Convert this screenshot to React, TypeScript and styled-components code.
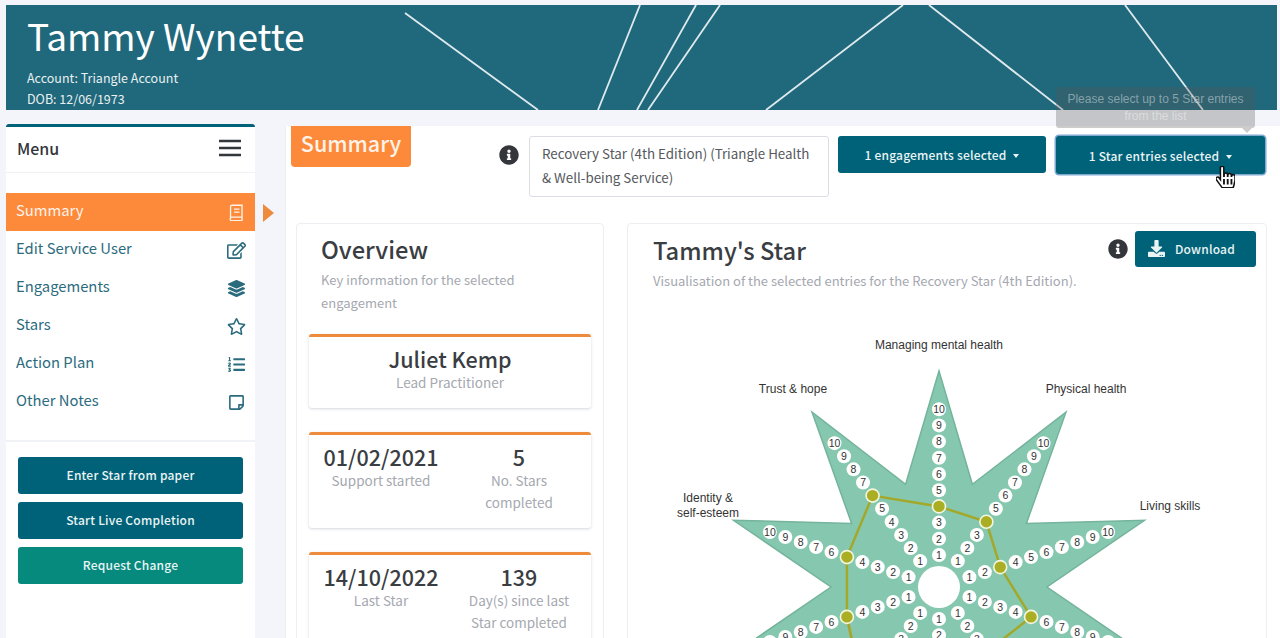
import styled, { createGlobalStyle } from "styled-components";
import {
  FaRegEdit,
  FaLayerGroup,
  FaRegStar,
  FaListOl,
  FaRegStickyNote,
  FaInfoCircle,
  FaDownload,
  FaHandPointer,
} from "react-icons/fa";

const Global = createGlobalStyle`
  html, body { margin: 0; padding: 0; background: #f3f5fa; }
  body { font-family: "Noto Sans CJK SC", "Noto Sans", sans-serif; color: #3a3d42; }
  * { box-sizing: border-box; }
`;

const Page = styled.div`
  height: 638px;
  overflow: hidden;
  padding: 5px 0 0 6px;
`;

const Banner = styled.header`
  position: relative;
  height: 105px;
  margin-right: 3px;
  padding: 7px 21px 0;
  background: #20687b;
  color: #fff;
  overflow: hidden;
`;

const BannerLines = styled.svg`
  position: absolute;
  left: 0;
  top: 0;
`;

const PatientName = styled.h1`
  position: relative;
  margin: 0 0 9px;
  font-size: 37px;
  line-height: 46px;
  font-weight: 400;
`;

const PatientMeta = styled.div`
  position: relative;
  font-size: 12.5px;
  line-height: 21px;
  color: #e8f0f2;
`;

const Content = styled.div`
  display: flex;
  margin-top: 14px;
`;

const Sidebar = styled.aside`
  flex: none;
  width: 249px;
  height: 520px;
  background: #fff;
  border-top: 3px solid #006278;
  border-radius: 3px 3px 0 0;
`;

const MenuHead = styled.div`
  display: flex;
  align-items: center;
  justify-content: space-between;
  height: 46px;
  padding: 0 14px 3px 11px;
  font-size: 16px;
  font-weight: 500;
  color: #33363b;
  border-bottom: 1px solid #f0f1f5;
`;

const MenuList = styled.nav`
  display: flex;
  flex-direction: column;
  padding: 20px 0 19px;
  border-bottom: 2px solid #f1f2f6;
`;

const MenuItem = styled.a<{ $active?: boolean }>`
  display: flex;
  align-items: center;
  justify-content: space-between;
  height: 38px;
  padding: 0 9px 5px 10px;
  font-size: 14.8px;
  color: ${(p) => (p.$active ? "#fdf3ea" : "#2b6b7e")};
  background: ${(p) => (p.$active ? "#fc8a3a" : "transparent")};
  svg {
    width: 19px;
    height: 17px;
    margin-top: 5px;
  }
`;

const SideActions = styled.div`
  display: flex;
  flex-direction: column;
  gap: 8px;
  padding: 15px 12px;
`;

const ActionButton = styled.button<{ $green?: boolean }>`
  height: 37px;
  padding: 0 0 2px;
  border: 0;
  border-radius: 3px;
  background: ${(p) => (p.$green ? "#068a7d" : "#006278")};
  color: #eaf4f5;
  font: 500 12px "Noto Sans CJK SC", "Noto Sans", sans-serif;
  letter-spacing: 0.22px;
`;

const ArrowSlot = styled.div`
  flex: none;
  width: 30px;
  padding: 80px 0 0 8px;
`;

const Arrow = styled.div`
  width: 0;
  height: 0;
  border-left: 11px solid #ee8a3c;
  border-top: 9px solid transparent;
  border-bottom: 9px solid transparent;
`;

const Main = styled.main`
  flex: 1;
  min-width: 0;
  margin-top: 2px;
  height: 520px;
  background: #fff;
  border-left: 1px solid #eceef3;
`;

const TopRow = styled.div`
  display: flex;
  align-items: flex-start;
  padding-right: 15px;
`;

const Tab = styled.div`
  width: 120px;
  height: 41px;
  margin-left: 5px;
  border-radius: 0 0 4px 4px;
  background: #fc8a3a;
  color: #fdf3ea;
  text-align: center;
  font-size: 21.5px;
  line-height: 34px;
  font-weight: 500;
`;

const Controls = styled.div`
  display: flex;
  align-items: flex-start;
  margin: 10px 0 0 auto;
`;

const InfoIcon = styled(FaInfoCircle)`
  flex: none;
  width: 20px;
  height: 20px;
  color: #33363b;
`;

const InfoSlot = styled.div`
  margin: 9px 10px 0 0;
`;

const SelectBox = styled.div`
  width: 300px;
  height: 61px;
  margin-right: 9px;
  padding: 5px 12px;
  border: 1px solid #dcdee4;
  border-radius: 3px;
  font-size: 13.35px;
  line-height: 24px;
  color: #55585d;
`;

const DropButton = styled.button<{ $focus?: boolean }>`
  width: ${(p) => (p.$focus ? "209px" : "208px")};
  height: ${(p) => (p.$focus ? "38px" : "37px")};
  padding: 0;
  border: 0;
  border-radius: 3px;
  background: #006278;
  color: #eaf4f5;
  font: 500 12px "Noto Sans CJK SC", "Noto Sans", sans-serif;
  letter-spacing: 0.2px;
  box-shadow: ${(p) => (p.$focus ? "0 0 0 1.5px #7fa9d0" : "none")};
  &::after {
    content: "";
    display: inline-block;
    margin-left: 7px;
    vertical-align: 2px;
    border-top: 4px solid #eaf4f5;
    border-left: 3.5px solid transparent;
    border-right: 3.5px solid transparent;
  }
`;

const TooltipAnchor = styled.div`
  position: relative;
  margin-left: 10px;
`;

const Tooltip = styled.div`
  position: absolute;
  left: 0;
  top: -49px;
  width: 199px;
  height: 41px;
  padding: 4px 8px;
  border-radius: 3px;
  background: rgba(85, 85, 85, 0.3);
  color: rgba(255, 255, 255, 0.42);
  text-align: center;
  font: 12px/17px "Liberation Sans", Arial, sans-serif;
  &::after {
    content: "";
    position: absolute;
    right: 3px;
    top: 41px;
    border-top: 5px solid rgba(85, 85, 85, 0.3);
    border-left: 5px solid transparent;
    border-right: 5px solid transparent;
  }
`;

const Cursor = styled(FaHandPointer)`
  position: absolute;
  left: 160px;
  top: 30px;
  width: 19px;
  height: 22px;
  color: #fff;
  stroke: #111;
  stroke-width: 36px;
`;

const CardRow = styled.div`
  display: flex;
  align-items: flex-start;
  gap: 23px;
  margin-top: 26px;
  padding-left: 10px;
`;

const Card = styled.section<{ $wide?: boolean }>`
  flex: none;
  width: ${(p) => (p.$wide ? "640px" : "308px")};
  border: 1px solid #eceef2;
  border-radius: 4px;
  background: #fff;
`;

const OverviewHead = styled.div`
  padding: 7px 25px 0 24px;
`;

const CardTitle = styled.h2`
  margin: 0;
  font-size: 23.7px;
  line-height: 36px;
  font-weight: 500;
  color: #3a3d42;
`;

const Hint = styled.p`
  margin: 2px 0 0;
  font-size: 13px;
  line-height: 22.5px;
  color: #a5a8af;
`;

const StatList = styled.div`
  display: flex;
  flex-direction: column;
  gap: 24px;
  margin-top: 20px;
  padding: 0 12px;
`;

const StatCard = styled.div<{ $single?: boolean }>`
  display: grid;
  grid-template-columns: ${(p) => (p.$single ? "1fr" : "1fr 1fr")};
  padding: 9px 3px 14px;
  border-top: 3px solid #ee8a3c;
  border-radius: 3px;
  background: #fff;
  box-shadow: 0 1px 3px rgba(60, 70, 90, 0.22);
  text-align: center;
`;

const StatValue = styled.div`
  font-size: 21.5px;
  line-height: 25px;
  font-weight: 500;
  color: #3a3d42;
`;

const StatLabel = styled.div`
  padding: 0 9px;
  font-size: 13.5px;
  line-height: 22.5px;
  color: #a5a8af;
`;

const StarHead = styled.div`
  display: flex;
  align-items: flex-start;
  justify-content: space-between;
  padding: 7px 10px 0 25px;
`;

const StarTitleBlock = styled.div`
  padding-top: 1px;
`;

const StarActions = styled.div`
  display: flex;
  align-items: center;
  gap: 7px;
`;

const DownloadButton = styled.button`
  display: flex;
  align-items: center;
  gap: 10px;
  width: 121px;
  height: 36px;
  padding: 0 13px 1px;
  border: 0;
  border-radius: 3px;
  background: #006278;
  color: #eaf4f5;
  font: 500 12px "Noto Sans CJK SC", "Noto Sans", sans-serif;
  letter-spacing: 0.2px;
  svg {
    width: 17px;
    height: 17px;
  }
`;

const StarChart = styled.svg`
  display: block;
  margin: 37px 0 0 11px;
`;

const HamburgerIcon = () => (
  <svg width="22" height="18" viewBox="0 0 22 18">
    <path d="M0 2h22M0 9h22M0 16h22" stroke="#33363b" strokeWidth="2.4" />
  </svg>
);

const BookIcon = () => (
  <svg viewBox="0 0 18 20" fill="none" stroke="currentColor" strokeWidth="1.6">
    <path d="M3 1.5h12.5v14H3.5a2 2 0 0 0 0 4h12v-4M2 17V3a1.6 1.6 0 0 1 1-1.5" />
    <path d="M6 6h6.5M6 9.5h6.5" />
  </svg>
);

const bannerLines = [
  [399, 8, 532, 105],
  [634, 0, 592, 105],
  [690, 0, 631, 105],
  [714, 0, 642, 105],
  [897, 0, 760, 105],
  [923, 0, 1057, 105],
  [1119, 0, 1197, 105],
];

const CX = 300;
const CY = 257;
const OUTER = 216;
const INNER = 108;

const polar = (deg: number, r: number) => {
  const a = (deg * Math.PI) / 180;
  return { x: CX + r * Math.sin(a), y: CY - r * Math.cos(a) };
};

const ringRadius = (n: number) => 32 + 16.2 * (n - 1);

const starPoints = Array.from({ length: 20 }, (_, i) => {
  const p = polar(i * 18, i % 2 === 0 ? OUTER : INNER);
  return `${p.x},${p.y}`;
}).join(" ");

// score per spoke, clockwise from the top
const scores = [4, 4, 3, 5, 4, 6, 7, 5, 5, 6];
const spokes = scores.map((_, i) => i * 36);

const toPoints = (list: number[]) =>
  list.map((n, i) => polar(spokes[i], ringRadius(n)));

const mainShape = toPoints(scores);
const orangeStart = mainShape[7];
const orangeEnd = polar(216, ringRadius(7));

const chartLabels = [
  { x: 300, y: 19, text: "Managing mental health" },
  { x: 154, y: 63, text: "Trust & hope" },
  { x: 447, y: 63, text: "Physical health" },
  { x: 69, y: 172, text: "Identity &" },
  { x: 69, y: 187, text: "self-esteem" },
  { x: 531, y: 180, text: "Living skills" },
];

function RecoveryStar() {
  return (
    <StarChart width="600" height="500" viewBox="0 0 600 500">
      <polygon points={starPoints} fill="#86c8af" stroke="#74b39c" strokeWidth="1.5" />
      <circle cx={CX} cy={CY} r="21" fill="#fff" />
      {spokes.map((deg, i) =>
        Array.from({ length: 10 }, (_, k) => k + 1)
          .filter((n) => n !== scores[i])
          .map((n) => {
            const p = polar(deg, ringRadius(n));
            return (
              <g key={`${deg}-${n}`}>
                <circle cx={p.x} cy={p.y} r="7" fill="#fff" />
                <text
                  x={p.x}
                  y={p.y + 3.8}
                  textAnchor="middle"
                  fontFamily="'Liberation Sans', Arial, sans-serif"
                  fontSize="10.5"
                  fill="#333"
                >
                  {n}
                </text>
              </g>
            );
          })
      )}
      <line
        x1={orangeStart.x}
        y1={orangeStart.y}
        x2={orangeEnd.x}
        y2={orangeEnd.y}
        stroke="#e0923a"
        strokeWidth="2.5"
      />
      <polygon
        points={mainShape.map((p) => `${p.x},${p.y}`).join(" ")}
        fill="none"
        stroke="#a3a82a"
        strokeWidth="2.5"
      />
      {mainShape.map((p, i) => (
        <circle key={i} cx={p.x} cy={p.y} r="6.5" fill="#a9ae24" stroke="#f4f6e0" strokeWidth="1.6" />
      ))}
      {chartLabels.map((l) => (
        <text
          key={l.text}
          x={l.x}
          y={l.y}
          textAnchor="middle"
          fontFamily="'Liberation Sans', Arial, sans-serif"
          fontSize="12"
          fill="#333"
        >
          {l.text}
        </text>
      ))}
    </StarChart>
  );
}

export default function App() {
  return (
    <Page>
      <Global />
      <Banner>
        <BannerLines width="1271" height="105">
          {bannerLines.map(([x1, y1, x2, y2]) => (
            <line key={x1} x1={x1} y1={y1} x2={x2} y2={y2} stroke="#dfeaee" strokeWidth="1.8" />
          ))}
        </BannerLines>
        <PatientName>Tammy Wynette</PatientName>
        <PatientMeta>Account: Triangle Account</PatientMeta>
        <PatientMeta>DOB: 12/06/1973</PatientMeta>
      </Banner>
      <Content>
        <Sidebar>
          <MenuHead>
            Menu
            <HamburgerIcon />
          </MenuHead>
          <MenuList>
            <MenuItem $active>
              Summary
              <BookIcon />
            </MenuItem>
            <MenuItem>
              Edit Service User
              <FaRegEdit />
            </MenuItem>
            <MenuItem>
              Engagements
              <FaLayerGroup />
            </MenuItem>
            <MenuItem>
              Stars
              <FaRegStar />
            </MenuItem>
            <MenuItem>
              Action Plan
              <FaListOl />
            </MenuItem>
            <MenuItem>
              Other Notes
              <FaRegStickyNote />
            </MenuItem>
          </MenuList>
          <SideActions>
            <ActionButton>Enter Star from paper</ActionButton>
            <ActionButton>Start Live Completion</ActionButton>
            <ActionButton $green>Request Change</ActionButton>
          </SideActions>
        </Sidebar>
        <ArrowSlot>
          <Arrow />
        </ArrowSlot>
        <Main>
          <TopRow>
            <Tab>Summary</Tab>
            <Controls>
              <InfoSlot>
                <InfoIcon />
              </InfoSlot>
              <SelectBox>Recovery Star (4th Edition) (Triangle Health &amp; Well-being Service)</SelectBox>
              <DropButton>1 engagements selected</DropButton>
              <TooltipAnchor>
                <DropButton $focus>1 Star entries selected</DropButton>
                <Tooltip>Please select up to 5 Star entries from the list</Tooltip>
                <Cursor />
              </TooltipAnchor>
            </Controls>
          </TopRow>
          <CardRow>
            <Card>
              <OverviewHead>
                <CardTitle>Overview</CardTitle>
                <Hint>Key information for the selected engagement</Hint>
              </OverviewHead>
              <StatList>
                <StatCard $single>
                  <div>
                    <StatValue>Juliet Kemp</StatValue>
                    <StatLabel>Lead Practitioner</StatLabel>
                  </div>
                </StatCard>
                <StatCard>
                  <div>
                    <StatValue>01/02/2021</StatValue>
                    <StatLabel>Support started</StatLabel>
                  </div>
                  <div>
                    <StatValue>5</StatValue>
                    <StatLabel>No. Stars completed</StatLabel>
                  </div>
                </StatCard>
                <StatCard>
                  <div>
                    <StatValue>14/10/2022</StatValue>
                    <StatLabel>Last Star</StatLabel>
                  </div>
                  <div>
                    <StatValue>139</StatValue>
                    <StatLabel>Day(s) since last Star completed</StatLabel>
                  </div>
                </StatCard>
              </StatList>
            </Card>
            <Card $wide>
              <StarHead>
                <StarTitleBlock>
                  <CardTitle>Tammy's Star</CardTitle>
                  <Hint>Visualisation of the selected entries for the Recovery Star (4th Edition).</Hint>
                </StarTitleBlock>
                <StarActions>
                  <InfoIcon />
                  <DownloadButton>
                    <FaDownload />
                    Download
                  </DownloadButton>
                </StarActions>
              </StarHead>
              <RecoveryStar />
            </Card>
          </CardRow>
        </Main>
      </Content>
    </Page>
  );
}
